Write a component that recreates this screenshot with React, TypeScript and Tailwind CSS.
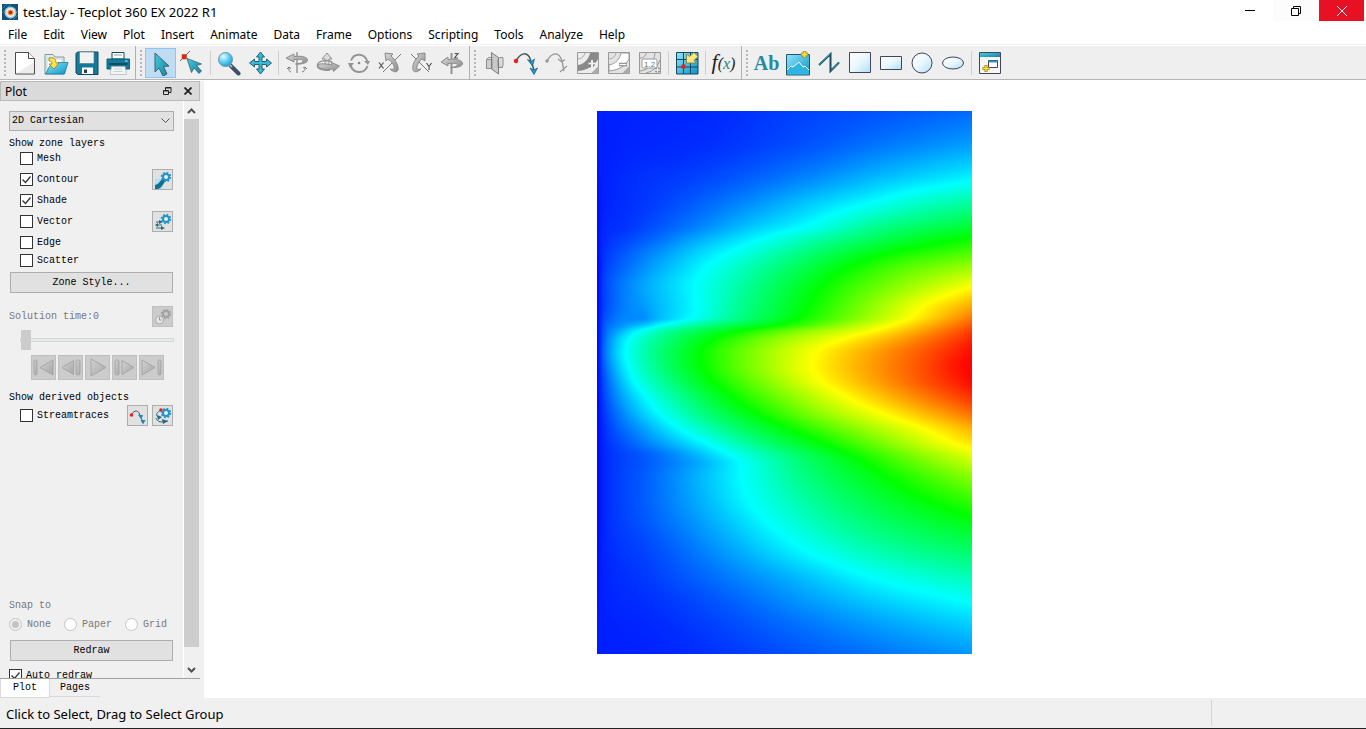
import { useEffect, useRef, useState } from "react";
import type { ReactNode } from "react";
import { clsx } from "clsx";

const MENUS = [
    "File", "Edit", "View", "Plot", "Insert", "Animate", "Data",
    "Frame", "Options", "Scripting", "Tools", "Analyze", "Help",
];

const FIELD_WIDTH = 375;
const FIELD_HEIGHT = 543;

// Scalar samples as [y, [x, value][]]; 0 blue, 1 cyan, 2 green, 3 yellow, 4 red
const FIELD: [number, [number, number][]][] = [
    [0, [[0, 0.11], [5, 0.12], [100, 0.15], [200, 0.25], [290, 0.33], [375, 0.42]]],
    [30, [[0, 0.1], [5, 0.12], [100, 0.17], [200, 0.3], [290, 0.46], [375, 0.6]]],
    [50, [[0, 0.09], [5, 0.12], [100, 0.21], [200, 0.39], [290, 0.61], [375, 0.79]]],
    [69, [[0, 0.07], [5, 0.12], [100, 0.27], [200, 0.52], [290, 0.79], [375, 1]]],
    [91, [[0, 0.05], [5, 0.12], [50, 0.22], [100, 0.37], [160, 0.58], [206, 0.76], [273, 1], [320, 1.2], [375, 1.38]]],
    [115, [[0, 0.04], [5, 0.14], [30, 0.21], [60, 0.33], [100, 0.51], [150, 0.76], [206, 1], [283, 1.46], [375, 1.8]]],
    [127, [[0, 0.04], [5, 0.15], [30, 0.27], [60, 0.42], [100, 0.66], [164, 1], [235, 1.42], [315, 1.82], [375, 2.03]]],
    [140, [[0, 0.04], [6, 0.18], [30, 0.36], [60, 0.55], [100, 0.81], [133, 1], [220, 1.57], [298, 2], [375, 2.28]]],
    [155, [[0, 0.03], [8, 0.24], [30, 0.43], [60, 0.66], [110, 1], [180, 1.5], [253, 2], [310, 2.33], [375, 2.6]]],
    [175, [[0, 0.03], [8, 0.28], [40, 0.6], [97, 1], [160, 1.5], [224, 2], [300, 2.54], [375, 3]]],
    [195, [[0, 0.03], [8, 0.28], [30, 0.52], [45, 0.6], [60, 0.72], [98, 1], [150, 1.5], [211, 2], [270, 2.52], [326, 3], [375, 3.35]]],
    [206, [[0, 0.03], [8, 0.32], [30, 0.53], [42, 0.54], [60, 0.71], [94, 1], [150, 1.55], [202, 2], [260, 2.52], [314, 3], [375, 3.53]]],
    [213, [[0, 0.03], [8, 0.37], [30, 0.62], [45, 0.74], [66, 1], [115, 1.5], [182, 2], [240, 2.52], [296, 3], [375, 3.66]]],
    [220, [[0, 0.03], [8, 0.4], [20, 0.65], [41, 1], [80, 1.5], [139, 2], [208, 2.56], [273, 3], [320, 3.35], [375, 3.78]]],
    [230, [[0, 0.03], [8, 0.45], [30, 1], [65, 1.5], [113, 2], [175, 2.56], [239, 3], [310, 3.45], [375, 3.89]]],
    [242, [[0, 0.03], [8, 0.47], [28, 1], [60, 1.5], [103, 2], [155, 2.5], [218, 3], [300, 3.51], [360, 3.88], [375, 3.97]]],
    [255, [[0, 0.03], [8, 0.42], [31, 1], [63, 1.5], [105, 2], [155, 2.5], [215, 3], [293, 3.5], [326, 3.7], [360, 3.93], [375, 4]]],
    [268, [[0, 0.03], [8, 0.36], [36, 1], [71, 1.5], [114, 2], [165, 2.5], [223, 3], [300, 3.51], [360, 3.89], [375, 3.98]]],
    [285, [[0, 0.03], [8, 0.3], [25, 0.65], [48, 1], [88, 1.5], [134, 2], [188, 2.5], [249, 3], [310, 3.41], [375, 3.82]]],
    [303, [[0, 0.03], [8, 0.24], [30, 0.59], [63, 1], [107, 1.5], [161, 2], [220, 2.52], [288, 3], [375, 3.56]]],
    [318, [[0, 0.03], [8, 0.2], [40, 0.56], [83, 1], [134, 1.5], [193, 2], [256, 2.5], [328, 3], [375, 3.3]]],
    [332, [[0, 0.03], [8, 0.17], [40, 0.43], [70, 0.67], [109, 1], [162, 1.5], [226, 2], [288, 2.5], [357, 3], [375, 3.1]]],
    [344, [[0, 0.03], [8, 0.16], [50, 0.37], [90, 0.64], [133, 1], [188, 1.48], [254, 2], [318, 2.5], [375, 2.89]]],
    [352, [[0, 0.03], [8, 0.16], [50, 0.36], [100, 0.66], [143, 1], [198, 1.49], [268, 2], [330, 2.46], [375, 2.76]]],
    [365, [[0, 0.03], [8, 0.16], [50, 0.38], [100, 0.7], [144, 1], [208, 1.5], [288, 2], [375, 2.55]]],
    [385, [[0, 0.03], [8, 0.16], [50, 0.38], [100, 0.68], [149, 1], [230, 1.52], [322, 2], [375, 2.26]]],
    [405, [[0, 0.03], [8, 0.16], [50, 0.36], [100, 0.62], [164, 1], [252, 1.5], [375, 2.01]]],
    [425, [[0, 0.04], [7, 0.15], [50, 0.31], [100, 0.54], [187, 1], [280, 1.46], [375, 1.77]]],
    [442, [[0, 0.05], [6, 0.14], [50, 0.27], [100, 0.47], [150, 0.7], [213, 1], [300, 1.36], [375, 1.57]]],
    [465, [[0, 0.06], [6, 0.13], [50, 0.23], [100, 0.38], [150, 0.55], [210, 0.77], [271, 1], [375, 1.3]]],
    [492, [[0, 0.08], [6, 0.13], [50, 0.18], [100, 0.28], [150, 0.41], [210, 0.59], [290, 0.81], [375, 1]]],
    [515, [[0, 0.1], [6, 0.12], [50, 0.15], [100, 0.22], [200, 0.43], [290, 0.63], [375, 0.8]]],
    [543, [[0, 0.11], [6, 0.12], [50, 0.13], [100, 0.17], [200, 0.32], [290, 0.46], [375, 0.59]]],
];

// Monotone cubic interpolation of the points, sampled at 0..count-1
function resample(points: [number, number][], count: number) {
    const slopes = points.slice(1).map((p, i) => (p[1] - points[i][1]) / (p[0] - points[i][0]));
    const tangents = points.map((_, i) => {
        const a = slopes[i - 1];
        const b = slopes[i];
        if (a === undefined) return b;
        if (b === undefined) return a;
        return a * b <= 0 ? 0 : (2 * a * b) / (a + b);
    });
    const out = new Float32Array(count);
    let k = 0;
    for (let x = 0; x < count; x++) {
        while (k < points.length - 2 && x > points[k + 1][0]) k++;
        const h = points[k + 1][0] - points[k][0];
        const t = (x - points[k][0]) / h;
        const t2 = t * t;
        const t3 = t2 * t;
        out[x] =
            (2 * t3 - 3 * t2 + 1) * points[k][1] +
            (t3 - 2 * t2 + t) * h * tangents[k] +
            (3 * t2 - 2 * t3) * points[k + 1][1] +
            (t3 - t2) * h * tangents[k + 1];
    }
    return out;
}

function rainbow(value: number): [number, number, number] {
    const v = Math.min(4, Math.max(0, value));
    if (v < 1) return [0, v * 255, 255];
    if (v < 2) return [0, 255, (2 - v) * 255];
    if (v < 3) return [(v - 2) * 255, 255, 0];
    return [255, (4 - v) * 255, 0];
}

function ContourPlot() {
    const ref = useRef<HTMLCanvasElement>(null);

    useEffect(() => {
        const ctx = ref.current?.getContext("2d");
        if (!ctx) return;
        const image = ctx.createImageData(FIELD_WIDTH, FIELD_HEIGHT);
        const rows = FIELD.map(([y, points]) => ({ y, values: resample(points, FIELD_WIDTH) }));
        for (let x = 0; x < FIELD_WIDTH; x++) {
            const column = resample(rows.map((r) => [r.y, r.values[x]]), FIELD_HEIGHT);
            for (let y = 0; y < FIELD_HEIGHT; y++) {
                const [r, g, b] = rainbow(column[y]);
                image.data.set([r, g, b, 255], (y * FIELD_WIDTH + x) * 4);
            }
        }
        ctx.putImageData(image, 0, 0);
    }, []);

    return <canvas ref={ref} width={FIELD_WIDTH} height={FIELD_HEIGHT} aria-label="Contour plot" className="block" />;
}

function Gradients() {
    return (
        <svg width="0" height="0" className="absolute" aria-hidden="true">
            <defs>
                <linearGradient id="cyan" x1="0" y1="0" x2="1" y2="1">
                    <stop offset="0" stopColor="#8fe6fb" />
                    <stop offset="1" stopColor="#0a94c8" />
                </linearGradient>
                <linearGradient id="teal" x1="0" y1="0" x2="1" y2="1">
                    <stop offset="0" stopColor="#3fd0e6" />
                    <stop offset="1" stopColor="#1a7f9c" />
                </linearGradient>
                <linearGradient id="pale" x1="0" y1="0" x2="1" y2="1">
                    <stop offset="0" stopColor="#ffffff" />
                    <stop offset="0.5" stopColor="#eaf7fd" />
                    <stop offset="1" stopColor="#a9e1f7" />
                </linearGradient>
                <linearGradient id="grey" x1="0" y1="0" x2="1" y2="1">
                    <stop offset="0" stopColor="#d8d8d8" />
                    <stop offset="1" stopColor="#8c8c8c" />
                </linearGradient>
                <radialGradient id="lens" cx="0.35" cy="0.3" r="0.8">
                    <stop offset="0" stopColor="#e4fbff" />
                    <stop offset="0.5" stopColor="#5ecdf3" />
                    <stop offset="1" stopColor="#1590c8" />
                </radialGradient>
            </defs>
        </svg>
    );
}

function Icon({ children, size = 26 }: { children: ReactNode; size?: number }) {
    return (
        <svg width={size} height={size} viewBox={`0 0 ${size} ${size}`} fill="none" aria-hidden="true">
            {children}
        </svg>
    );
}

const icons = {
    page: (
        <Icon>
            <path d="M3.500 2.500h13l6 6V24h-19z" fill="#fff" stroke="#4a4a4a" />
            <path d="M5 23h17V12z" fill="#ececec" />
            <path d="M16.500 2.500v6h6" fill="#fff" stroke="#4a4a4a" />
        </Icon>
    ),
    open: (
        <Icon>
            <path d="M2 24V4.500h8l2 2.500h9v17z" fill="#e3eaea" stroke="#7f9aa0" />
            <path d="M4 9h15v10H4z" fill="#fff" stroke="#b3c6cb" strokeWidth="0.600" />
            <path d="M2.500 24L7 15.500h6l2-3h10L21.500 24z" fill="url(#cyan)" stroke="#1b7d9d" strokeWidth="0.800" />
            <path d="M6 8c5-1 7 1 7 5h3l-5 6-5-5h3c0-2-1-3-3-3z" fill="#ffe34d" stroke="#7d6d20" strokeWidth="0.700" />
        </Icon>
    ),
    save: (
        <Icon>
            <path d="M2 3.500L3.500 2H24v22.500H4L2 23z" fill="#147a9a" stroke="#12495c" />
            <path d="M5.500 2h14.500v11.500H5.500z" fill="#f1f3f3" stroke="#5d747c" strokeWidth="0.600" />
            <path d="M8 17.500h11V24H8z" fill="#fff" />
            <path d="M10 19.500h3V23h-3z" fill="#12495c" />
        </Icon>
    ),
    print: (
        <Icon>
            <path d="M7 2.500h12V9H7z" fill="#fff" stroke="#12495c" />
            <path d="M9 5h8" stroke="#8a9ba0" />
            <path d="M2 9h22.500v10H2z" fill="#147a9a" stroke="#0f5e7c" />
            <path d="M4 14h18.500" stroke="#0c3d50" strokeWidth="1.500" />
            <path d="M20 11h2.500" stroke="#7de8ff" strokeWidth="1.200" />
            <path d="M6.500 16.500h13.500l1.500 8H5z" fill="#f4f6f6" stroke="#9fb4bb" strokeWidth="0.700" />
            <path d="M9 19h8M8.500 21.500h9" stroke="#c4d3d8" />
        </Icon>
    ),
    select: (
        <Icon>
            <path d="M7 3v19l4-4 4 8 4-2-3.500-7.500L21 16z" fill="url(#teal)" stroke="#40606c" />
        </Icon>
    ),
    adjust: (
        <Icon>
            <path d="M1 11L11 1" stroke="#444" strokeWidth="0.800" />
            <path d="M3 4.500h4.500V9H3z" fill="#e8201c" stroke="#a40" strokeWidth="0.500" />
            <path d="M8 8.500l4.500 14 2.500-4.500 5 5.500 2.500-2.500-5-5.500 5-1.500z" fill="url(#teal)" stroke="#40606c" strokeWidth="0.800" />
        </Icon>
    ),
    zoom: (
        <Icon>
            <path d="M14.500 15.500l8 8" stroke="#3d4f6e" strokeWidth="4" strokeLinecap="round" />
            <path d="M13 14l3 3" stroke="#a7b2bc" strokeWidth="2" />
            <circle cx="9.500" cy="9.500" r="7" fill="url(#lens)" stroke="#6f98a9" />
        </Icon>
    ),
    pan: (
        <Icon>
            <path
                d="M13.500 2l4 5h-2.500v4.500h4.500V9l5 4-5 4v-2.500H15V19h2.500l-4 5-4-5H12v-4.500H7.500V17l-5-4 5-4v2.500H12V7H9.500z"
                fill="#35bbd8"
                stroke="#285d70"
            />
        </Icon>
    ),
    rotateRoll: (
        <Icon>
            <path d="M13 2v21" stroke="#999" strokeWidth="1.500" />
            <path d="M2 8l8-4v2.500c9-1 14 1 13.500 4-.5 2.500-6 4-12 3.500 7-.5 8.500-2.500 7-4-1-.8-4-1-8.500-.5V12z" fill="url(#grey)" stroke="#8c8c8c" />
            <path d="M7 22c-2-.5-2.500-2-2-4M5 17l-2 2M5 17l2 1.500M18 22c2-.5 3-2 3-4M21 17l-2 1M21 17l2 2" stroke="#777" />
        </Icon>
    ),
    rotateSpherical: (
        <Icon>
            <path d="M10 20V9H7l5-6 5 6h-3v11z" fill="#dcdcdc" stroke="#929292" />
            <path d="M17 12c-5-3-14-1-14.500 3S9 21 15 20" stroke="#929292" strokeWidth="1.500" />
            <path d="M3 15c2-2 8-1 14 0l-.5-2.500 8 3.500-6 5.500-.5-2.500C10 20 3 19 3 15z" fill="url(#grey)" stroke="#8c8c8c" />
        </Icon>
    ),
    rotateTwist: (
        <Icon>
            <path d="M5 10.500C8 2.500 19 2.500 21.500 12M21.500 16C18.500 24.500 7 24 4.500 15" stroke="#949494" strokeWidth="2" />
            <path d="M2 13h6l-4 5zM18 11h6l-2 4z" fill="#949494" />
            <circle cx="13" cy="13" r="1.300" fill="#888" />
        </Icon>
    ),
    rotateX: (
        <Icon>
            <path d="M6 22L24 4" stroke="#777" />
            <path d="M8 3l8 1-2 2c5 4 8 11 7 14-1 3-5 2-8-1 3 1 5 0 4-3-1-2.500-3-5-6-7l-2 2z" fill="url(#grey)" stroke="#8a8a8a" />
            <path d="M2 12.500l4.500 6M6.500 12.500l-4.500 6" stroke="#555" strokeWidth="1.200" />
        </Icon>
    ),
    rotateY: (
        <Icon>
            <path d="M3 4l18 18" stroke="#777" />
            <path d="M17 3l-8 1 2 2C6 10 4 16 5 20c1 3 5 2 8-1-3 1-5 0-4-3 1-2.500 2-5 5-7l3 2z" fill="url(#grey)" stroke="#8a8a8a" />
            <path d="M18.500 13l2.500 3.500M23.500 13L21 16.500V20" stroke="#555" strokeWidth="1.200" />
        </Icon>
    ),
    rotateZ: (
        <Icon>
            <path d="M12.500 3v21" stroke="#929292" strokeWidth="2" />
            <path d="M2 12l7-5v2.500c9-1 15 1 14.500 4.500-.5 2.500-6 4-12 3.500 6-.5 8-2.500 6.500-3.500-1-.8-4-1-9-.5V16z" fill="url(#grey)" stroke="#8c8c8c" />
            <path d="M15.500 3.500h3.500L15.500 8H19" stroke="#555" strokeWidth="1.200" />
        </Icon>
    ),
    slice: (
        <Icon>
            <path d="M4.500 9.500h6v9h-6zM15.500 9.500h5v8h-5z" fill="#cdcdcd" stroke="#8e8e8e" />
            <path d="M4.500 9.500l2-2h5M15.500 9.500l2-2h3.500v8l-1 2" fill="#ddd" stroke="#8e8e8e" />
            <path d="M9.500 2.500l7 5V24l-7-5z" fill="#b9b9b9" fillOpacity="0.700" stroke="#7d7d7d" />
        </Icon>
    ),
    stream: (
        <Icon>
            <path d="M3 11C8 2 15 1 18 11l3 9" stroke="#3d535d" strokeWidth="1.500" />
            <circle cx="3" cy="11" r="2.200" fill="#e8201c" />
            <path d="M14.500 9.500l4 2 3-2.500-2 7zM17 18l4 2 3.500-2L21 24.500z" fill="#1d9ad0" stroke="#1b6385" strokeWidth="0.800" />
        </Icon>
    ),
    streamOff: (
        <Icon>
            <path d="M3 11C8 2 15 1 18 11l2 10M14 9l4 3 3-2.500M16 22l7-6" stroke="#999" strokeWidth="1.300" />
            <circle cx="3" cy="11" r="1.800" fill="#999" />
        </Icon>
    ),
    contourAdd: (
        <Icon>
            <path d="M2.500 2.500h21v21h-21z" fill="#ececec" stroke="#999" />
            <path d="M3 15C10 14 14 8 15 3h8v6C20 15 14 20 3 21z" fill="#8a8a8a" />
            <path d="M3 9c4 0 6-3 7-6" stroke="#aaa" />
            <path d="M23.500 16v7.500H16z" fill="#aaa" />
            <path d="M17 10.500v6M14 13.500h6" stroke="#777" strokeWidth="4" />
            <path d="M17 10v7M13.500 13.500h7" stroke="#f0f0f0" strokeWidth="2" />
        </Icon>
    ),
    contourRemove: (
        <Icon>
            <path d="M2.500 2.500h21v21h-21z" fill="#e3e3e3" stroke="#999" />
            <path d="M3 15C10 14 14 8 15 3h8v6C20 15 14 20 3 21z" fill="#fff" stroke="#999" />
            <path d="M3 9c4 0 6-3 7-6" stroke="#aaa" />
            <path d="M23.500 16v7.500H16z" fill="#aaa" />
            <path d="M13 14.500h8" stroke="#888" strokeWidth="3.500" />
            <path d="M13.500 14.500h7" stroke="#fff" strokeWidth="1.300" />
        </Icon>
    ),
    contourLabel: (
        <Icon>
            <path d="M2.500 2.500h21v21h-21z" fill="#e3e3e3" stroke="#999" />
            <path d="M3 8c4 0 6-3 7-6M3 21c9-1 14-8 15-18M9 23c8-2 12-7 14-13" stroke="#999" />
            <rect x="5" y="9" width="15" height="9" rx="1.500" fill="#fff" stroke="#999" />
            <text x="7" y="17" fontSize="8" fontFamily="Liberation Sans, sans-serif" fill="#777">1.2</text>
            <path d="M20.500 17.500v5M18 20h5" stroke="#888" strokeWidth="3.500" />
            <path d="M20.500 17.500v5M18 20h5" stroke="#eee" strokeWidth="1.300" />
        </Icon>
    ),
    probe: (
        <Icon>
            <path d="M2.500 2.500h21.500V24H2.500z" fill="url(#cyan)" stroke="#17475c" />
            <path d="M9.500 3v21M16.500 3v21M3 9.500h21M3 17h21" stroke="#17475c" />
            <path d="M20 2.500l4 4-4 4 2 2.500h-9.500V4l3 2.500z" fill="#ffe680" stroke="#837326" strokeWidth="0.800" />
            <path d="M7.500 14.500h4v4h-4z" fill="#e8201c" />
        </Icon>
    ),
    fx: (
        <span className="font-[Liberation_Serif,serif] text-[22px] leading-6 italic text-[#222]">
            f<span className="text-base">(<span className="text-[#2b7f96]">x</span>)</span>
        </span>
    ),
    text: (
        <span className="font-[Liberation_Serif,serif] text-[20px] leading-6 font-bold text-[#2389a5]">Ab</span>
    ),
    image: (
        <Icon>
            <path d="M1.500 4.500h23V25h-23z" fill="url(#cyan)" stroke="#24596d" />
            <path d="M2 20l4-4 2 1 6-5 4 5 2-1 4 4v4.500H2z" fill="#2fb5e2" />
            <path d="M2 20l4-4 2 1 6-5 4 5 2-1 4 4" stroke="#fff" />
            <path d="M19.500 1v7M16 4.500h7" stroke="#8e7d19" strokeWidth="3.500" />
            <path d="M19.500 1.500v6M16.500 4.500h6" stroke="#ffe23c" strokeWidth="2" />
        </Icon>
    ),
    polyline: (
        <Icon>
            <path d="M3 15L14.500 4v17L23 12.500" stroke="#19505f" strokeWidth="2" />
            <path d="M3 14.500L14 4M15.500 20L23 12.500" stroke="#33a5bd" />
        </Icon>
    ),
    square: (
        <Icon><path d="M2.500 2.500h21v20h-21z" fill="url(#pale)" stroke="#43435a" /></Icon>
    ),
    rectangle: (
        <Icon><path d="M2.500 6.500h21v13h-21z" fill="url(#pale)" stroke="#43435a" /></Icon>
    ),
    circle: (
        <Icon><circle cx="13" cy="13" r="10" fill="url(#pale)" stroke="#43435a" /></Icon>
    ),
    ellipse: (
        <Icon><ellipse cx="13" cy="13" rx="10.500" ry="6" fill="url(#pale)" stroke="#43435a" /></Icon>
    ),
    frame: (
        <Icon>
            <path d="M2.500 2.500h21v21h-21z" fill="#f6f6f6" stroke="#43435a" />
            <path d="M3 3h20v4H3z" fill="url(#teal)" />
            <path d="M11.500 10.500h9v7h-9z" fill="#fff" stroke="#43435a" />
            <path d="M11.500 11.500h9" stroke="#2f93bb" strokeWidth="2" />
            <path d="M9 15v7M5.500 18.500h7" stroke="#8e7d19" strokeWidth="3" />
            <path d="M9 15.500v6M6 18.500h6" stroke="#ffe23c" strokeWidth="1.500" />
        </Icon>
    ),
};

type IconName = keyof typeof icons;
type Tool = { icon: IconName; label: string; disabled?: boolean } | "|";

const TOOL_GROUPS: Tool[][] = [
    [
        { icon: "page", label: "New layout" },
        { icon: "open", label: "Open layout" },
        { icon: "save", label: "Save layout" },
        { icon: "print", label: "Print" },
    ],
    [
        { icon: "select", label: "Select" },
        { icon: "adjust", label: "Adjust" },
        "|",
        { icon: "zoom", label: "Zoom" },
        { icon: "pan", label: "Translate" },
        "|",
        { icon: "rotateRoll", label: "Rollerball rotate", disabled: true },
        { icon: "rotateSpherical", label: "Spherical rotate", disabled: true },
        { icon: "rotateTwist", label: "Twist", disabled: true },
        { icon: "rotateX", label: "Rotate about X", disabled: true },
        { icon: "rotateY", label: "Rotate about Y", disabled: true },
        { icon: "rotateZ", label: "Rotate about Z", disabled: true },
    ],
    [
        { icon: "slice", label: "Slice", disabled: true },
        { icon: "stream", label: "Add streamtrace" },
        { icon: "streamOff", label: "Streamtrace termination line", disabled: true },
        { icon: "contourAdd", label: "Add contour level", disabled: true },
        { icon: "contourRemove", label: "Remove contour level", disabled: true },
        { icon: "contourLabel", label: "Add contour label", disabled: true },
        "|",
        { icon: "probe", label: "Probe" },
        "|",
        { icon: "fx", label: "Extract function" },
    ],
    [
        { icon: "text", label: "Text" },
        { icon: "image", label: "Insert image" },
        { icon: "polyline", label: "Polyline" },
        { icon: "square", label: "Square" },
        { icon: "rectangle", label: "Rectangle" },
        { icon: "circle", label: "Circle" },
        { icon: "ellipse", label: "Ellipse" },
        "|",
        { icon: "frame", label: "Create frame" },
    ],
];

function Toolbar() {
    const [active, setActive] = useState<IconName>("select");

    return (
        <div className="flex h-[34px] shrink-0 border-b border-[#b5b5b5] bg-[#efefef]">
            {TOOL_GROUPS.map((group, i) => (
                <div
                    key={i}
                    className={clsx("flex h-full items-center", i < 3 && "border-r border-[#b0b0b0] pr-[2px]")}
                >
                    <div className="flex w-[9px] flex-col items-center gap-[2px]">
                        {Array.from({ length: 7 }, (_, k) => (
                            <span key={k} className="size-[2px] bg-[#b8b8b8]" />
                        ))}
                    </div>
                    {group.map((tool, k) =>
                        tool === "|" ? (
                            <div key={k} className="flex w-[6px] justify-center">
                                <span className="h-6 w-px bg-[#cfcfcf]" />
                            </div>
                        ) : (
                            <button
                                key={k}
                                type="button"
                                aria-label={tool.label}
                                disabled={tool.disabled}
                                onClick={() => setActive(tool.icon)}
                                className={clsx(
                                    "flex h-[30px] w-[31px] items-center justify-center border",
                                    active === tool.icon ? "border-[#8dc4f0] bg-[#bfdcf2]" : "border-transparent"
                                )}
                            >
                                {icons[tool.icon]}
                            </button>
                        )
                    )}
                </div>
            ))}
        </div>
    );
}

function TitleBar() {
    return (
        <header className="flex h-[24px] shrink-0 items-start bg-white">
            <div className="flex h-[24px] items-center gap-[5px] pl-[2px]">
                <svg width="16" height="16" viewBox="0 0 16 16" aria-hidden="true">
                    <path d="M0 0h16v16H0z" fill="#124f7c" />
                    <path d="M0 5L5 0M0 9l9-9M7 16l9-9M11 16l5-5" stroke="#2c86b0" />
                    <circle cx="8.500" cy="8.500" r="6" fill="#8ec9dd" />
                    <circle cx="8.500" cy="8.500" r="4.500" fill="#fff0cf" />
                    <circle cx="8.500" cy="8.500" r="3" fill="#f39a56" />
                    <circle cx="8.500" cy="8.500" r="1.800" fill="#c81a1a" />
                </svg>
                <h1 className="text-[13px] leading-4">test.lay - Tecplot 360 EX 2022 R1</h1>
            </div>
            <div className="ml-auto flex h-[21px] pr-[2px]">
                <button type="button" aria-label="Minimize" className="flex w-[46px] items-center justify-center">
                    <span className="h-px w-[10px] bg-black" />
                </button>
                <button type="button" aria-label="Restore" className="flex w-[46px] items-center justify-center bg-[#fcfcfc]">
                    <svg width="10" height="10" viewBox="0 0 10 10" fill="none" stroke="#000">
                        <path d="M.5 2.500h7v7h-7zM2.500 2V.5h7v7H8" />
                    </svg>
                </button>
                <button type="button" aria-label="Close" className="flex w-[45px] items-center justify-center bg-[#e81123]">
                    <svg width="10" height="10" viewBox="0 0 10 10" stroke="#fff">
                        <path d="M0 0l10 10M10 0L0 10" />
                    </svg>
                </button>
            </div>
        </header>
    );
}

interface CheckProps {
    label: string;
    defaultChecked?: boolean;
}

function Check({ label, defaultChecked }: CheckProps) {
    return (
        <label className="flex h-[13px] items-center gap-1">
            <span className="grid size-[13px]">
                <input
                    type="checkbox"
                    defaultChecked={defaultChecked}
                    className="peer col-start-1 row-start-1 size-[13px] appearance-none border border-[#333] bg-white"
                />
                <svg
                    viewBox="0 0 13 13"
                    className="pointer-events-none invisible col-start-1 row-start-1 size-[13px] peer-checked:visible"
                    fill="none"
                    stroke="#333"
                >
                    <path d="M2.500 6.500l3 3 5-6" strokeWidth="1.300" />
                </svg>
            </span>
            {label}
        </label>
    );
}

function Gear({ color, hole }: { color: string; hole: string }) {
    return (
        <>
            <circle cx="12" cy="6" r="4.300" stroke={color} strokeWidth="2" strokeDasharray="1.700 1.670" />
            <circle cx="12" cy="6" r="3" stroke={color} strokeWidth="2" fill={hole} />
        </>
    );
}

function DetailButton({ label, disabled, children }: { label: string; disabled?: boolean; children: ReactNode }) {
    return (
        <button
            type="button"
            aria-label={label}
            disabled={disabled}
            className={clsx(
                "flex size-[21px] items-center justify-center border",
                disabled ? "border-[#bfbfbf] bg-[#cccccc]" : "border-[#adadad] bg-[#e1e1e1]"
            )}
        >
            <Icon size={18}>{children}</Icon>
        </button>
    );
}

const PLAYBACK = [
    { label: "First step", shape: <><rect x="2" y="4" width="3" height="15" rx="1.500" /><path d="M21 4v15L8 11.500z" /></> },
    { label: "Step backward", shape: <><rect x="17" y="4" width="4" height="15" rx="1.500" /><path d="M14.500 4.500v14L3 11.500z" /></> },
    { label: "Play", shape: <path d="M5 3v17l15-8.500z" /> },
    { label: "Step forward", shape: <><rect x="2" y="4" width="4" height="15" rx="1.500" /><path d="M9 4.500v14l12-7z" /></> },
    { label: "Last step", shape: <><rect x="18" y="4" width="3" height="15" rx="1.500" /><path d="M2 4v15l13-7.500z" /></> },
];

function Scrollbar() {
    return (
        <div className="flex w-[16px] shrink-0 flex-col border-l border-white bg-[#f0f0f0]">
            <button type="button" aria-label="Scroll up" className="flex h-[18px] items-center justify-center pt-[2px]">
                <svg width="9" height="6" viewBox="0 0 9 6" fill="none" stroke="#505050" strokeWidth="2">
                    <path d="M1 5l3.500-3.500L8 5" />
                </svg>
            </button>
            <div className="flex-1 bg-[#cdcdcd]" />
            <button type="button" aria-label="Scroll down" className="flex h-[31px] items-center justify-center pt-[14px]">
                <svg width="9" height="6" viewBox="0 0 9 6" fill="none" stroke="#505050" strokeWidth="2">
                    <path d="M1 1l3.500 3.500L8 1" />
                </svg>
            </button>
        </div>
    );
}

function PlotPanel() {
    const [tab, setTab] = useState("Plot");
    const [snap, setSnap] = useState("None");

    return (
        <aside className="flex w-[204px] shrink-0 flex-col bg-[#f0f0f0] pr-1">
            <div className="flex h-[20px] shrink-0 items-center border border-[#b9b9b9] bg-[#dadada] pr-[7px] pl-1">
                <h2 className="flex-1 pt-px text-[12px]">Plot</h2>
                <button type="button" aria-label="Float panel" className="mr-3">
                    <svg width="9" height="9" viewBox="0 0 9 9" fill="none" stroke="#222">
                        <path d="M.5 3.500h5v4h-5zM.5 4h5M2.500 3V.5h5.500v5H6M2.500 1h5" />
                    </svg>
                </button>
                <button type="button" aria-label="Close panel">
                    <svg width="8" height="8" viewBox="0 0 8 8" stroke="#222" strokeWidth="1.800">
                        <path d="M.5 .5l7 7M7.500 .5l-7 7" />
                    </svg>
                </button>
            </div>

            <div className="flex min-h-0 flex-1 border-b border-[#a0a0a0] pr-px font-[Liberation_Mono,monospace] text-[10px] leading-3">
                <div className="flex min-w-0 flex-1 flex-col overflow-hidden px-[9px] pt-[10px]">
                    <div className="grid h-5 shrink-0 items-center">
                        <select
                            aria-label="Plot type"
                            className="col-start-1 row-start-1 h-5 appearance-none border border-[#adadad] bg-[#e1e1e1] px-[2px]"
                        >
                            <option>2D Cartesian</option>
                            <option>3D Cartesian</option>
                            <option>XY Line</option>
                            <option>Polar Line</option>
                        </select>
                        <svg
                            width="9"
                            height="6"
                            viewBox="0 0 9 6"
                            fill="none"
                            stroke="#555"
                            className="pointer-events-none col-start-1 row-start-1 mr-1 justify-self-end"
                        >
                            <path d="M.5 .5l4 4 4-4" />
                        </svg>
                    </div>

                    <p className="mt-[7px]">Show zone layers</p>
                    <div className="mt-[2px] flex flex-col gap-2 pr-px pl-[11px]">
                        <Check label="Mesh" />
                        <div className="flex h-[13px] items-center justify-between">
                            <Check label="Contour" defaultChecked />
                            <DetailButton label="Contour details">
                                <path d="M1 8h8v10H1z" fill="#a9e3f3" />
                                <path d="M1 18v-4c4-1 5-4 8-7l3 3c-3 2-3 6-8 8z" fill="#136f90" />
                                <Gear color="#2394c8" hole="#e1f4fb" />
                            </DetailButton>
                        </div>
                        <Check label="Shade" defaultChecked />
                        <div className="flex h-[13px] items-center justify-between">
                            <Check label="Vector" />
                            <DetailButton label="Vector details">
                                <path d="M2 9h5M2 15h7M4 12h4" stroke="#276a80" />
                                <path d="M5 7l4 2-4 2zM7 13l4 2-4 2zM1 12l3-2v4z" fill="#276a80" />
                                <Gear color="#2394c8" hole="#e1f4fb" />
                            </DetailButton>
                        </div>
                        <Check label="Edge" />
                    </div>
                    <div className="mt-[5px] pl-[11px]">
                        <Check label="Scatter" />
                    </div>
                    <button type="button" className="mx-px mt-[5px] h-[21px] shrink-0 border border-[#adadad] bg-[#e1e1e1]">
                        Zone Style...
                    </button>

                    <div className="mt-[13px] flex items-center justify-between pr-px text-[#787878]">
                        <label htmlFor="solution-time">Solution time:0</label>
                        <DetailButton label="Time details" disabled>
                            <Gear color="#a3a3a3" hole="#ccc" />
                            <circle cx="5.500" cy="12" r="4" fill="#e4e4e4" stroke="#aaa" />
                            <path d="M5.500 9v3h2" stroke="#999" />
                        </DetailButton>
                    </div>
                    <input
                        id="solution-time"
                        type="range"
                        min={0}
                        max={1}
                        defaultValue={0}
                        disabled
                        className="mt-[3px] ml-[11px] h-5 shrink-0 appearance-none bg-transparent [&::-webkit-slider-runnable-track]:h-1 [&::-webkit-slider-runnable-track]:border [&::-webkit-slider-runnable-track]:border-[#d6d6d6] [&::-webkit-slider-runnable-track]:bg-[#e7eaea] [&::-webkit-slider-thumb]:mt-[-9px] [&::-webkit-slider-thumb]:h-5 [&::-webkit-slider-thumb]:w-[10px] [&::-webkit-slider-thumb]:appearance-none [&::-webkit-slider-thumb]:bg-[#cccccc]"
                    />
                    <div className="mt-[5px] flex justify-center gap-[2px] pl-3">
                        {PLAYBACK.map(({ label, shape }) => (
                            <button
                                key={label}
                                type="button"
                                aria-label={label}
                                disabled
                                className="size-[25px] shrink-0 border border-[#bfbfbf] bg-[#cccccc]"
                            >
                                <svg width="23" height="23" viewBox="0 0 23 23" fill="url(#grey)" fillOpacity="0.600" stroke="#a6a6a6">
                                    {shape}
                                </svg>
                            </button>
                        ))}
                    </div>

                    <p className="mt-3">Show derived objects</p>
                    <div className="mt-px flex h-[21px] shrink-0 items-center gap-1 pr-px pl-[11px]">
                        <div className="flex-1">
                            <Check label="Streamtraces" />
                        </div>
                        <DetailButton label="Add streamtraces">
                            <path d="M2 8c4-6 8-5 9 1l3 6" stroke="#3d535d" />
                            <circle cx="2.500" cy="8" r="1.800" fill="#e8201c" />
                            <path d="M9 8h5l-1.500 4zM11.500 13h5L14 17.500z" fill="#1d88b8" />
                        </DetailButton>
                        <DetailButton label="Streamtrace details">
                            <path d="M7 3C1 6 2 10 5 10M2 11c1 4 6 5 12 3" stroke="#276a80" />
                            <path d="M3 8l5 2-4 3zM8 12l6 2-5 3z" fill="#276a80" />
                            <circle cx="7" cy="3" r="1.800" fill="#e8201c" />
                            <Gear color="#2394c8" hole="#e1f4fb" />
                        </DetailButton>
                    </div>

                    <fieldset disabled className="mt-[174px] shrink-0 text-[#787878]">
                        <legend>Snap to</legend>
                        <div className="mt-[6px] flex justify-between pr-[7px]">
                            {["None", "Paper", "Grid"].map((name) => (
                                <label key={name} className="flex items-center gap-[5px]">
                                    <input
                                        type="radio"
                                        name="snap"
                                        checked={snap === name}
                                        onChange={() => setSnap(name)}
                                        className="size-[13px] appearance-none rounded-full border border-[#c4c4c4] bg-white p-[2px] checked:bg-[#c4c4c4] checked:bg-clip-content"
                                    />
                                    {name}
                                </label>
                            ))}
                        </div>
                    </fieldset>
                    <button type="button" className="mx-px mt-[9px] h-[21px] shrink-0 border border-[#adadad] bg-[#e1e1e1]">
                        Redraw
                    </button>
                    <div className="mt-2 shrink-0">
                        <Check label="Auto redraw" defaultChecked />
                    </div>
                </div>
                <Scrollbar />
            </div>

            <div role="tablist" className="flex h-[19px] shrink-0 items-start font-[Liberation_Mono,monospace] text-[10px] leading-3">
                {["Plot", "Pages"].map((name) => (
                    <button
                        key={name}
                        type="button"
                        role="tab"
                        aria-selected={tab === name}
                        onClick={() => setTab(name)}
                        className={clsx(
                            "w-[50px] border-b border-[#d9d9d9]",
                            tab === name ? "h-[19px] border-x bg-white" : "h-[18px]"
                        )}
                    >
                        {name}
                    </button>
                ))}
            </div>
        </aside>
    );
}

export default function App() {
    return (
        <div className="flex h-screen flex-col overflow-hidden bg-white font-['Noto_Sans',sans-serif] text-[12px] text-black">
            <Gradients />
            <TitleBar />
            <nav className="flex h-[21px] shrink-0 items-center gap-4 border-b border-[#f0f0f0] pt-[2px] pl-2">
                {MENUS.map((name) => (
                    <button key={name} type="button" className="text-[12px] leading-4">
                        {name}
                    </button>
                ))}
            </nav>
            <div className="h-px shrink-0 bg-white" />
            <Toolbar />
            <div className="flex min-h-0 flex-1 pt-px">
                <PlotPanel />
                <main className="flex min-w-0 flex-1 items-center justify-center overflow-hidden bg-white pr-[2px] pb-[14px]">
                    <ContourPlot />
                </main>
            </div>
            <footer className="flex h-[31px] shrink-0 items-center border-b border-[#222] bg-[#f0f0f0] pl-[6px]">
                <p className="flex-1 pt-px text-[13px] leading-4">Click to Select, Drag to Select Group</p>
                <div className="h-[26px] w-[155px] border-l border-[#d4d4d4]" />
            </footer>
        </div>
    );
}
